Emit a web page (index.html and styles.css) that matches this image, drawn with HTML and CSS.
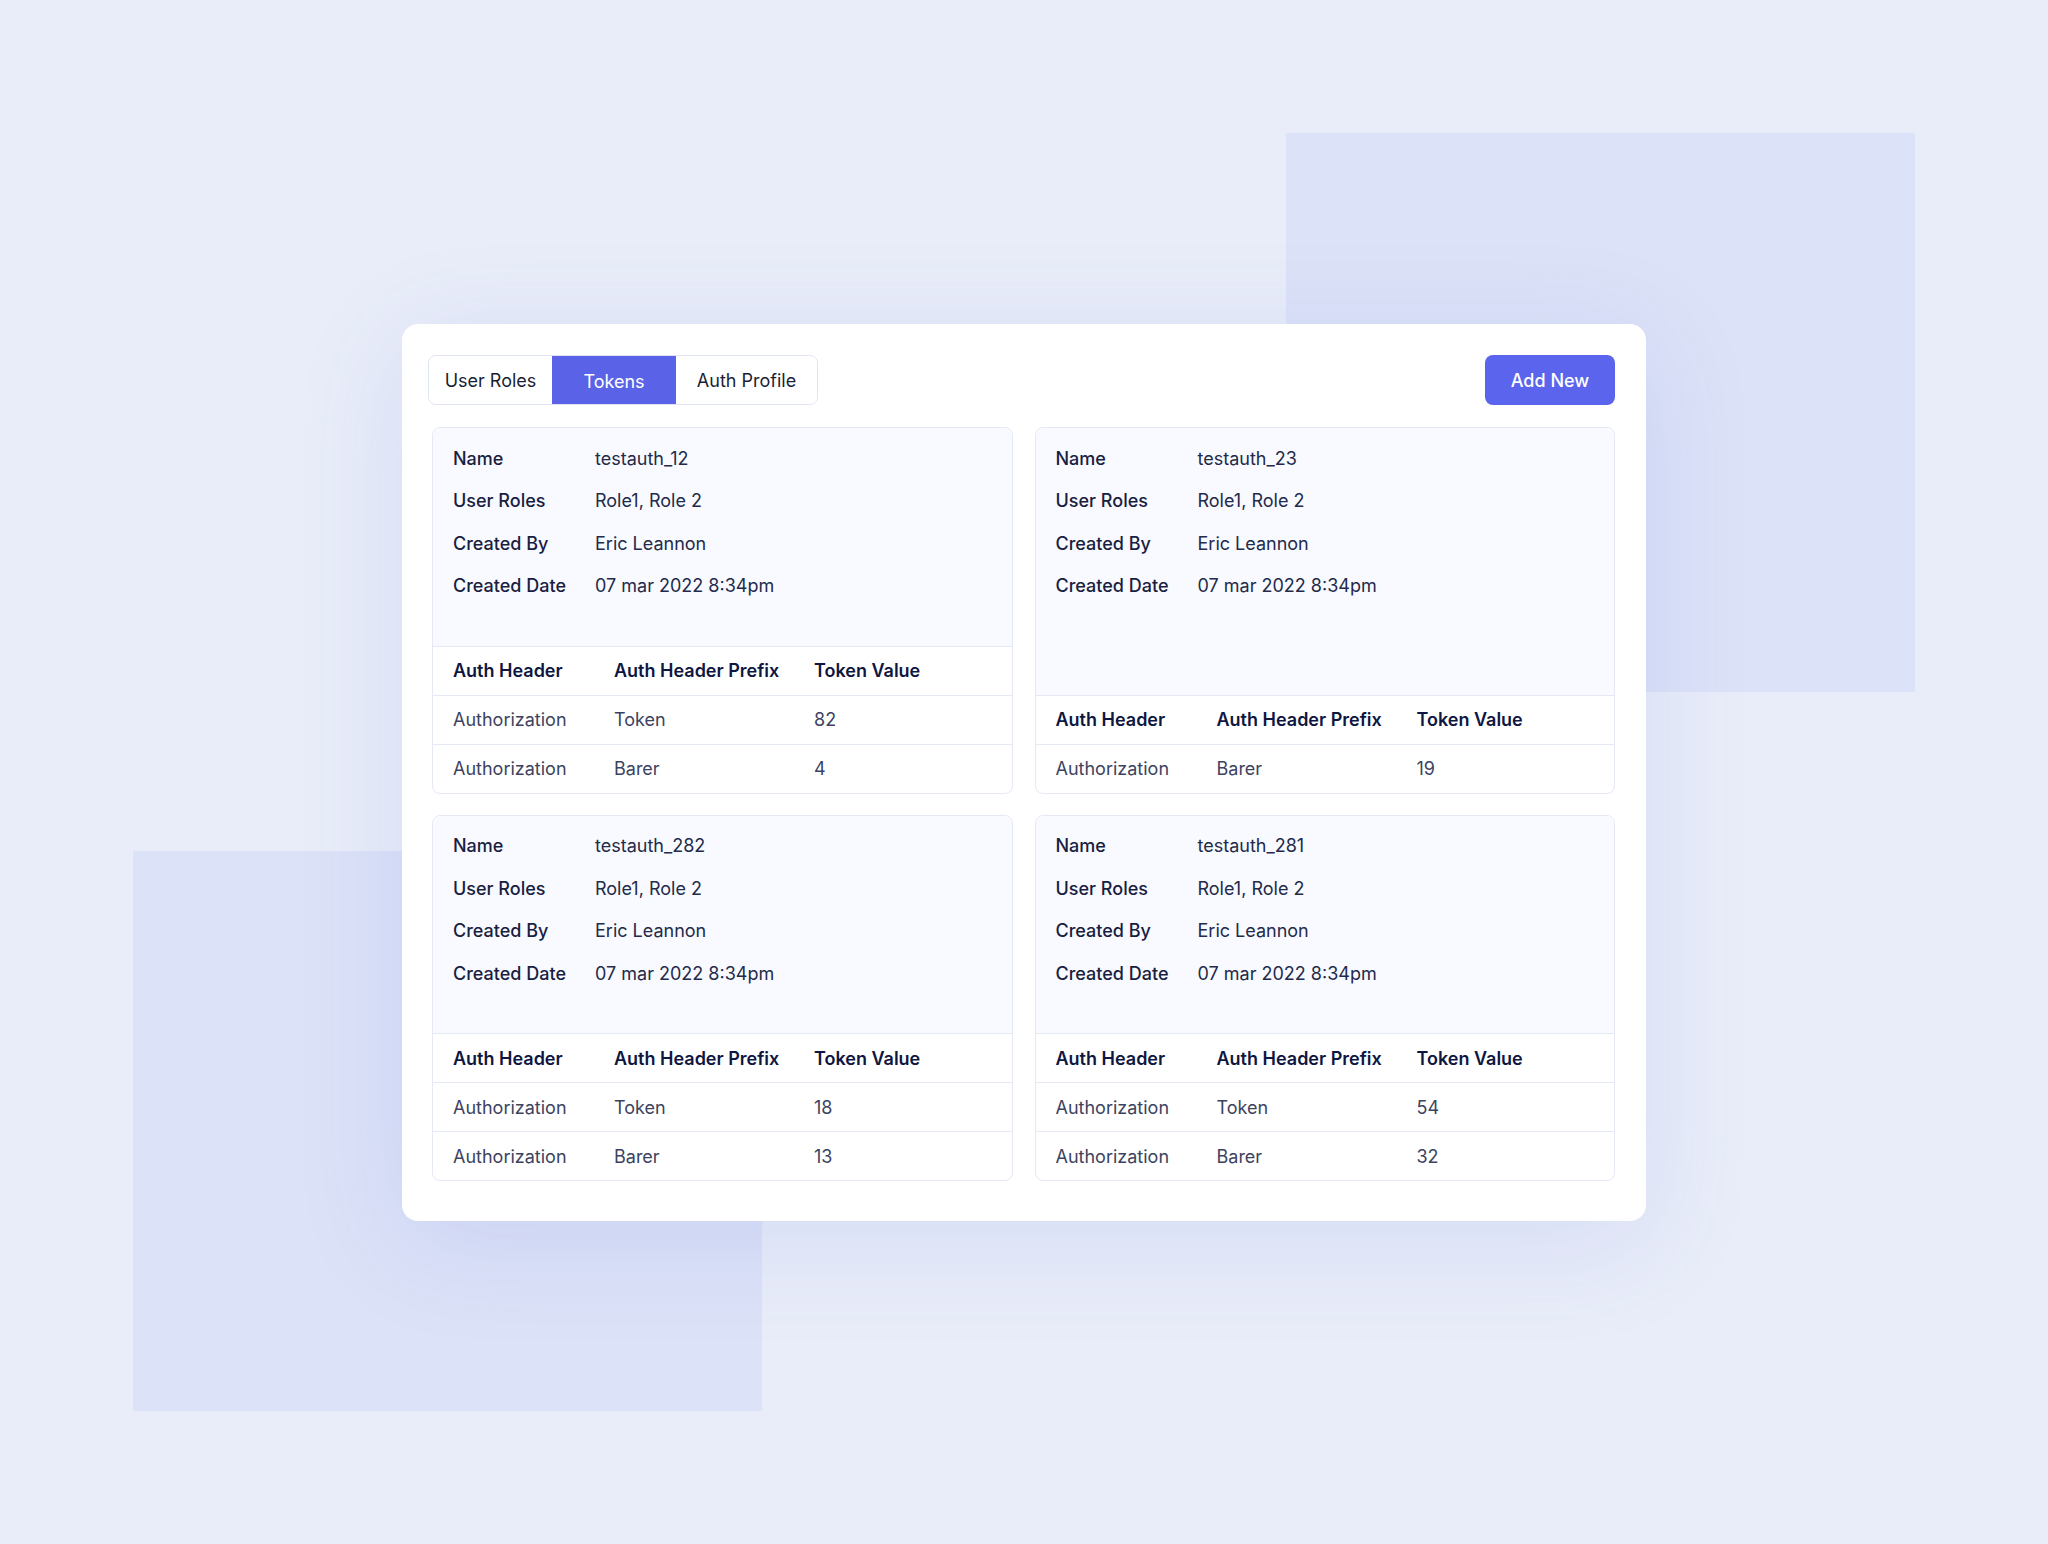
FILE: index.html
```html
<!DOCTYPE html>
<html lang="en">
<head>
<meta charset="UTF-8">
<meta name="viewport" content="width=device-width, initial-scale=1.0">
<title>Tokens</title>
<link rel="stylesheet" href="styles.css">
</head>
<body>

<div class="deco deco-top"></div>
<div class="deco deco-bottom"></div>

<div class="panel">
  <div class="toolbar">
    <div class="tabs">
      <button class="tab tab-roles">User Roles</button>
      <button class="tab tab-tokens active">Tokens</button>
      <button class="tab tab-profile">Auth Profile</button>
    </div>
    <button class="add-button">Add New</button>
  </div>

  <div class="token-grid">

    <!-- testauth_12 -->
    <div class="token-card">
      <div class="token-info">
        <div class="info-row"><span class="info-label">Name</span><span class="info-value">testauth_12</span></div>
        <div class="info-row"><span class="info-label">User Roles</span><span class="info-value">Role1, Role 2</span></div>
        <div class="info-row"><span class="info-label">Created By</span><span class="info-value">Eric Leannon</span></div>
        <div class="info-row"><span class="info-label">Created Date</span><span class="info-value">07 mar 2022 8:34pm</span></div>
      </div>
      <div class="token-table">
        <div class="table-row table-head"><span>Auth Header</span><span>Auth Header Prefix</span><span>Token Value</span></div>
        <div class="table-row"><span>Authorization</span><span>Token</span><span>82</span></div>
        <div class="table-row"><span>Authorization</span><span>Barer</span><span>4</span></div>
      </div>
    </div>

    <!-- testauth_23 -->
    <div class="token-card">
      <div class="token-info">
        <div class="info-row"><span class="info-label">Name</span><span class="info-value">testauth_23</span></div>
        <div class="info-row"><span class="info-label">User Roles</span><span class="info-value">Role1, Role 2</span></div>
        <div class="info-row"><span class="info-label">Created By</span><span class="info-value">Eric Leannon</span></div>
        <div class="info-row"><span class="info-label">Created Date</span><span class="info-value">07 mar 2022 8:34pm</span></div>
      </div>
      <div class="token-table">
        <div class="table-row table-head"><span>Auth Header</span><span>Auth Header Prefix</span><span>Token Value</span></div>
        <div class="table-row"><span>Authorization</span><span>Barer</span><span>19</span></div>
      </div>
    </div>

    <!-- testauth_282 -->
    <div class="token-card">
      <div class="token-info">
        <div class="info-row"><span class="info-label">Name</span><span class="info-value">testauth_282</span></div>
        <div class="info-row"><span class="info-label">User Roles</span><span class="info-value">Role1, Role 2</span></div>
        <div class="info-row"><span class="info-label">Created By</span><span class="info-value">Eric Leannon</span></div>
        <div class="info-row"><span class="info-label">Created Date</span><span class="info-value">07 mar 2022 8:34pm</span></div>
      </div>
      <div class="token-table">
        <div class="table-row table-head"><span>Auth Header</span><span>Auth Header Prefix</span><span>Token Value</span></div>
        <div class="table-row"><span>Authorization</span><span>Token</span><span>18</span></div>
        <div class="table-row"><span>Authorization</span><span>Barer</span><span>13</span></div>
      </div>
    </div>

    <!-- testauth_281 -->
    <div class="token-card">
      <div class="token-info">
        <div class="info-row"><span class="info-label">Name</span><span class="info-value">testauth_281</span></div>
        <div class="info-row"><span class="info-label">User Roles</span><span class="info-value">Role1, Role 2</span></div>
        <div class="info-row"><span class="info-label">Created By</span><span class="info-value">Eric Leannon</span></div>
        <div class="info-row"><span class="info-label">Created Date</span><span class="info-value">07 mar 2022 8:34pm</span></div>
      </div>
      <div class="token-table">
        <div class="table-row table-head"><span>Auth Header</span><span>Auth Header Prefix</span><span>Token Value</span></div>
        <div class="table-row"><span>Authorization</span><span>Token</span><span>54</span></div>
        <div class="table-row"><span>Authorization</span><span>Barer</span><span>32</span></div>
      </div>
    </div>

  </div>
</div>

</body>
</html>
```

FILE: styles.css
```css
html, body {
  margin: 0;
  padding: 0;
}

body {
  position: relative;
  width: 2048px;
  height: 1544px;
  overflow: hidden;
  background: #e9edf9;
  font-family: Inter, "Noto Sans", Arial, sans-serif;
  font-size: 18px;
  color: #141b3c;
}

/* background squares */
.deco {
  position: absolute;
  background: #dce2f7;
  z-index: 0;
}

.deco-top {
  left: 1286px;
  top: 133px;
  width: 629px;
  height: 559px;
}

.deco-bottom {
  left: 133px;
  top: 851px;
  width: 629px;
  height: 560px;
}

.panel {
  position: relative;
  z-index: 1;
  box-sizing: border-box;
  width: 1244px;
  margin: 324px 0 0 402px;
  padding: 31px 31px 40px 30px;
  background: #fff;
  border-radius: 16px;
  box-shadow: 0 20px 110px rgba(80, 100, 215, 0.13);
}

.toolbar {
  display: flex;
  justify-content: space-between;
  align-items: center;
  height: 50px;
}

.tabs {
  display: flex;
  height: 50px;
  margin-left: -4px;
  box-sizing: border-box;
  border: 1px solid #dfe4f3;
  border-radius: 8px;
  overflow: hidden;
}

.tab {
  border: none;
  background: #fff;
  font-family: inherit;
  font-size: 18px;
  color: #1a1f36;
  padding: 0;
  cursor: pointer;
}

.tab-roles { width: 123px; }
.tab-tokens { width: 124px; }
.tab-profile { width: 141px; }

.tab.active {
  background: #5a63e8;
  color: #fff;
  padding-top: 2px;
}

.add-button {
  width: 130px;
  height: 50px;
  border: none;
  border-radius: 8px;
  background: #5a64ec;
  color: #fff;
  font-family: inherit;
  font-size: 18px;
  font-weight: 500;
  cursor: pointer;
}

.token-grid {
  display: grid;
  grid-template-columns: 1fr 1fr;
  gap: 21px 22px;
  margin-top: 22px;
}

.token-card {
  display: flex;
  flex-direction: column;
  border: 1px solid #e5e9f5;
  border-radius: 8px;
  overflow: hidden;
  background: #fff;
}

.token-info {
  flex: 1;
  background: #f8faff;
  padding: 9px 20px 38.5px;
}

.info-row {
  display: flex;
  align-items: center;
  height: 42.5px;
}

.info-label {
  width: 142px;
  font-weight: 500;
  color: #18203f;
}

.info-value {
  color: #232a4a;
}

.table-row {
  display: grid;
  grid-template-columns: 161px 200px 1fr;
  align-items: center;
  height: 48px;
  padding: 0 20px;
  border-top: 1px solid #e5e9f5;
  color: #3c4361;
}

.table-head {
  font-weight: 600;
  color: #0e1641;
}
```
